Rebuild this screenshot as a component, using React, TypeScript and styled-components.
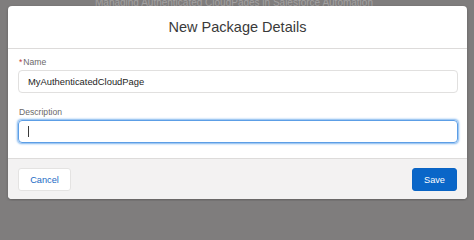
import React from 'react';
import styled, { createGlobalStyle } from 'styled-components';

const GlobalStyle = createGlobalStyle`
  html, body {
    margin: 0;
    padding: 0;
    background: #7f7d7d;
  }
  body {
    font-family: 'Liberation Sans', Arial, sans-serif;
  }
`;

const Page = styled.div`
  width: 474px;
  height: 201px;
  overflow: hidden;
  background: #7f7d7d;
  display: flex;
  flex-direction: column;
  padding: 0 7px 0 8px;
  box-sizing: border-box;
`;

const BehindStrip = styled.div`
  height: 6px;
  overflow: hidden;
  padding-left: 87px;
  display: flex;
  align-items: flex-end;
`;

const BehindText = styled.span`
  font-size: 10px;
  line-height: 10px;
  margin-bottom: -2px;
  color: #a3a1a1;
  white-space: nowrap;
`;

const Modal = styled.div`
  display: flex;
  flex-direction: column;
  background: #ffffff;
  border-radius: 4px;
  box-shadow: 0 1px 3px rgba(0, 0, 0, 0.25);
  overflow: hidden;
`;

const Header = styled.div`
  height: 42px;
  display: flex;
  align-items: center;
  justify-content: center;
  border-bottom: 1px solid #dddbda;
`;

const Title = styled.h2`
  margin: 0;
  font-size: 14.5px;
  font-weight: 400;
  color: #3a3a3a;
`;

const Body = styled.div`
  display: flex;
  flex-direction: column;
  gap: 14px;
  padding: 8px 9px 15px 10px;
`;

const Field = styled.div`
  display: flex;
  flex-direction: column;
  gap: 2px;
`;

const Label = styled.label`
  font-size: 8.6px;
  line-height: 11px;
  color: #6b6969;
  padding-left: 1px;
`;

const Required = styled.abbr`
  color: #c23934;
  text-decoration: none;
  margin-right: 1px;
`;

const InputBox = styled.div<{ focused?: boolean }>`
  height: 23px;
  box-sizing: border-box;
  display: flex;
  align-items: center;
  padding: 0 9px;
  border-radius: 4px;
  border: 1px solid ${(p) => (p.focused ? '#5c9ee6' : '#e1e0df')};
  box-shadow: ${(p) => (p.focused ? '0 0 2px 0.5px #7fb5ee' : 'none')};
  font-size: 9.4px;
  color: #1e1e1e;
`;

const Caret = styled.span`
  width: 1px;
  height: 11px;
  background: #3a3a3a;
`;

const Footer = styled.div`
  display: flex;
  justify-content: space-between;
  align-items: center;
  padding: 9px 10px 8px 10px;
  background: #f3f2f2;
  border-top: 1px solid #dddbda;
`;

const Button = styled.button<{ brand?: boolean }>`
  height: 23px;
  padding: 0;
  width: ${(p) => (p.brand ? '45px' : '53px')};
  border-radius: 3px;
  font-family: 'Liberation Sans', Arial, sans-serif;
  font-size: 9.2px;
  border: 1px solid ${(p) => (p.brand ? '#0a64c4' : '#e4e3e2')};
  background: ${(p) => (p.brand ? '#0a66c8' : '#ffffff')};
  color: ${(p) => (p.brand ? '#ffffff' : '#1869c4')};
  cursor: pointer;
`;

export default function App() {
  return (
    <>
      <GlobalStyle />
      <Page>
        <BehindStrip>
          <BehindText>Managing Authenticated CloudPages in Salesforce Automation</BehindText>
        </BehindStrip>
        <Modal>
          <Header>
            <Title>New Package Details</Title>
          </Header>
          <Body>
            <Field>
              <Label>
                <Required title="required">*</Required>Name
              </Label>
              <InputBox>MyAuthenticatedCloudPage</InputBox>
            </Field>
            <Field>
              <Label>Description</Label>
              <InputBox focused>
                <Caret />
              </InputBox>
            </Field>
          </Body>
          <Footer>
            <Button>Cancel</Button>
            <Button brand>Save</Button>
          </Footer>
        </Modal>
      </Page>
    </>
  );
}
